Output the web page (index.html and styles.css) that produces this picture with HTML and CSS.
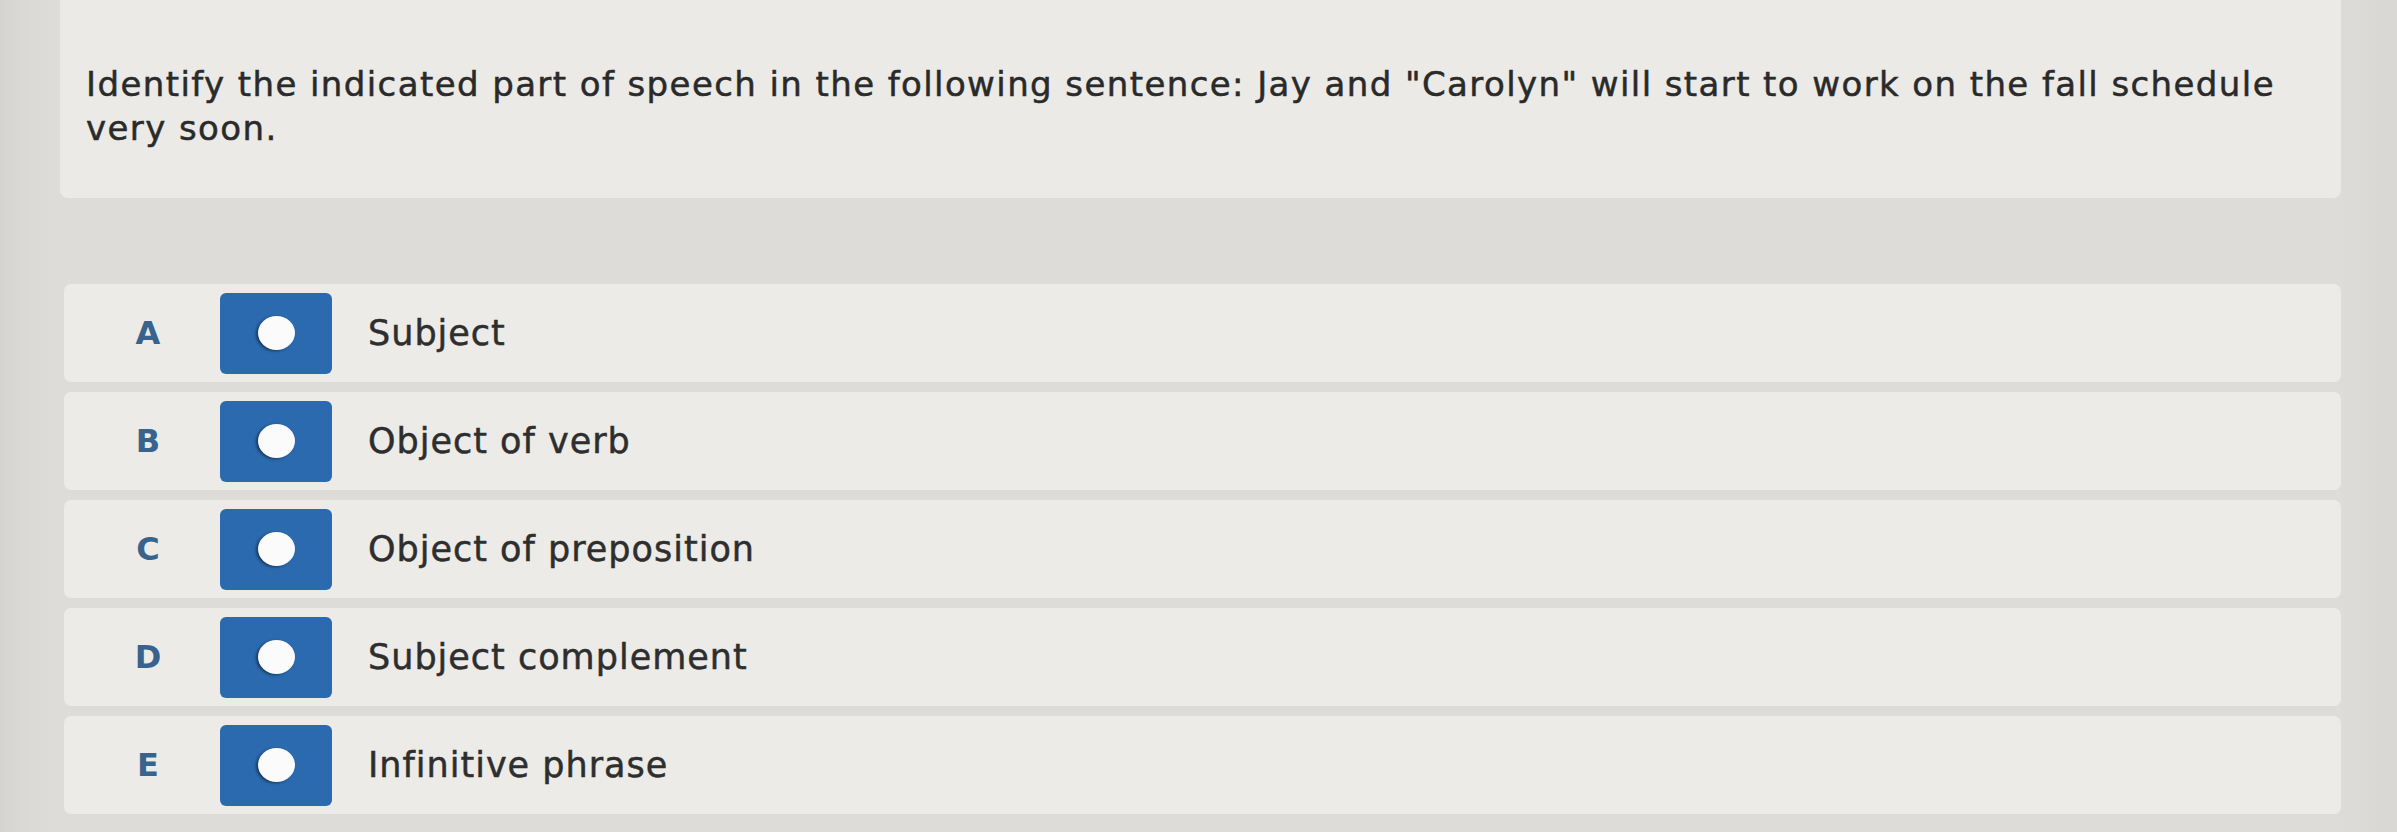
FILE: index.html
```html
<!DOCTYPE html>
<html lang="en">
<head>
<meta charset="utf-8">
<title>Question</title>
<link rel="stylesheet" href="styles.css">
</head>
<body>
<main class="page">
  <section class="question">
    <p class="question-text">Identify the indicated part of speech in the following sentence: Jay and "Carolyn" will start to work on the fall schedule very soon.</p>
  </section>
  <ul class="options">
    <li class="option"><span class="letter">A</span><span class="radio"><span class="dot"></span></span><span class="label">Subject</span></li>
    <li class="option"><span class="letter">B</span><span class="radio"><span class="dot"></span></span><span class="label">Object of verb</span></li>
    <li class="option"><span class="letter">C</span><span class="radio"><span class="dot"></span></span><span class="label">Object of preposition</span></li>
    <li class="option"><span class="letter">D</span><span class="radio"><span class="dot"></span></span><span class="label">Subject complement</span></li>
    <li class="option"><span class="letter">E</span><span class="radio"><span class="dot"></span></span><span class="label">Infinitive phrase</span></li>
  </ul>
</main>
</body>
</html>
```
FILE: styles.css
```css
html, body {
  margin: 0;
  padding: 0;
}
body {
  width: 2397px;
  height: 832px;
  overflow: hidden;
  background: linear-gradient(90deg, #d6d4d0 0px, #dcdad6 30px, #dedcd8 60px, #dedcd8 2340px, #d9d7d3 2397px);
  font-family: "DejaVu Sans", Verdana, sans-serif;
}
.page {
  padding: 0 56px 0 60px;
}
.question {
  background: #ebeae7;
  border-radius: 0 0 8px 8px;
  padding: 62px 30px 48px 26px;
}
.question-text {
  margin: 0;
  font-size: 34px;
  line-height: 44px;
  letter-spacing: 1.4px;
  color: #2a2a2a;
  -webkit-text-stroke: 0.5px #2a2a2a;
  max-width: 2240px;
}
.options {
  list-style: none;
  margin: 86px 0 0 4px;
  padding: 0;
  display: flex;
  flex-direction: column;
  gap: 10px;
}
.option {
  height: 98px;
  background: #ecebe8;
  border-radius: 7px;
  display: flex;
  align-items: center;
}
.letter {
  width: 144px;
  padding-left: 12px;
  text-align: center;
  font-weight: bold;
  font-size: 32px;
  color: #38638d;
}
.radio {
  width: 112px;
  height: 81px;
  background: #2b6aaf;
  border-radius: 6px;
  display: flex;
  align-items: center;
  justify-content: center;
  margin-right: 36px;
  flex: none;
}
.dot {
  width: 37px;
  height: 34px;
  border-radius: 50%;
  background: #fbfbfb;
  box-shadow: -2px 1px 3px rgba(0, 0, 0, 0.45);
}
.label {
  font-size: 35px;
  letter-spacing: 1px;
  color: #2e2e2e;
  -webkit-text-stroke: 0.5px #2e2e2e;
}
```
